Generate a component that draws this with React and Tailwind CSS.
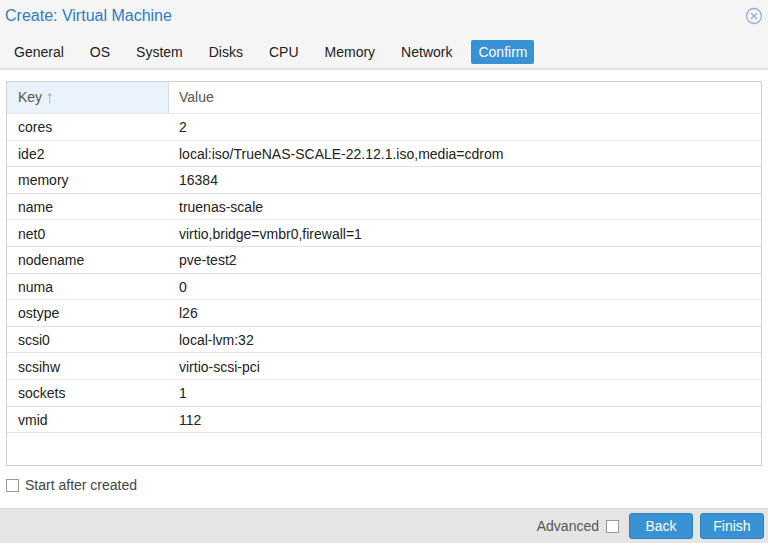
export default function App() {
  const rows = [
    ["cores", "2"],
    ["ide2", "local:iso/TrueNAS-SCALE-22.12.1.iso,media=cdrom"],
    ["memory", "16384"],
    ["name", "truenas-scale"],
    ["net0", "virtio,bridge=vmbr0,firewall=1"],
    ["nodename", "pve-test2"],
    ["numa", "0"],
    ["ostype", "l26"],
    ["scsi0", "local-lvm:32"],
    ["scsihw", "virtio-scsi-pci"],
    ["sockets", "1"],
    ["vmid", "112"],
  ];
  const tabs = ["General", "OS", "System", "Disks", "CPU", "Memory", "Network"];
  return (
    <div className="w-[768px] h-[543px] flex flex-col bg-white text-[14px] text-[#222]" style={{ fontFamily: '"Liberation Sans", Arial, sans-serif' }}>
      <div className="bg-[#f5f5f5] h-[70px] flex flex-col border-b-2 border-[#e2e2e2]">
        <div className="h-[32px] flex items-center justify-between pl-[5px] pr-[5px]">
          <span className="text-[16px] text-[#2e7cc4]">Create: Virtual Machine</span>
          <svg width="18" height="18" viewBox="0 0 18 18" fill="none" stroke="#8fb3d6" strokeWidth="1.3">
            <circle cx="9" cy="9" r="7.5" />
            <path d="M6 6l6 6M12 6l-6 6" />
          </svg>
        </div>
        <div className="flex items-center pl-[1px] mt-[8px]">
          {tabs.map((t) => (
            <span key={t} className="px-[13px] h-[24px] flex items-center">{t}</span>
          ))}
          <span className="ml-[6px] px-[7px] h-[24px] flex items-center bg-[#3892d4] text-white rounded-[2px]">Confirm</span>
        </div>
      </div>
      <div className="flex-1 px-[6px] pt-[11px] flex flex-col">
        <div className="border border-[#d0d0d0] h-[385px] flex flex-col">
          <div className="flex h-[32px] border-b border-[#e6e6e6] text-[#555]">
            <div className="w-[162px] bg-[#eaf3fb] border-r border-[#dcdcdc] flex items-center pl-[11px]">
              Key <span className="text-[#9aa] text-[17px] ml-[3px] leading-none">↑</span>
            </div>
            <div className="flex items-center pl-[10px]">Value</div>
          </div>
          {rows.map(([k, v]) => (
            <div key={k} className="flex h-[26.6px] border-b border-[#e4e4e4] items-center pt-[2px]">
              <div className="w-[162px] pl-[11px]">{k}</div>
              <div className="pl-[10px]">{v}</div>
            </div>
          ))}
        </div>
        <div className="flex items-center gap-[6px] mt-[9px] text-[#444]">
          <span className="w-[13px] h-[13px] border border-[#999] bg-white" />
          Start after created
        </div>
      </div>
      <div className="h-[35px] bg-[#e5e5e5] border-t border-[#d6d6d6] flex items-center justify-end gap-[7px] pr-[4px]">
        <span className="text-[#555]">Advanced</span>
        <span className="w-[13px] h-[13px] border border-[#999] bg-white mr-[3px]" />
        <button className="w-[64px] h-[26px] bg-[#3892d4] text-white rounded-[3px] border border-[#2f7fbd]">Back</button>
        <button className="w-[64px] h-[26px] bg-[#3892d4] text-white rounded-[3px] border border-[#2f7fbd]">Finish</button>
      </div>
    </div>
  );
}
